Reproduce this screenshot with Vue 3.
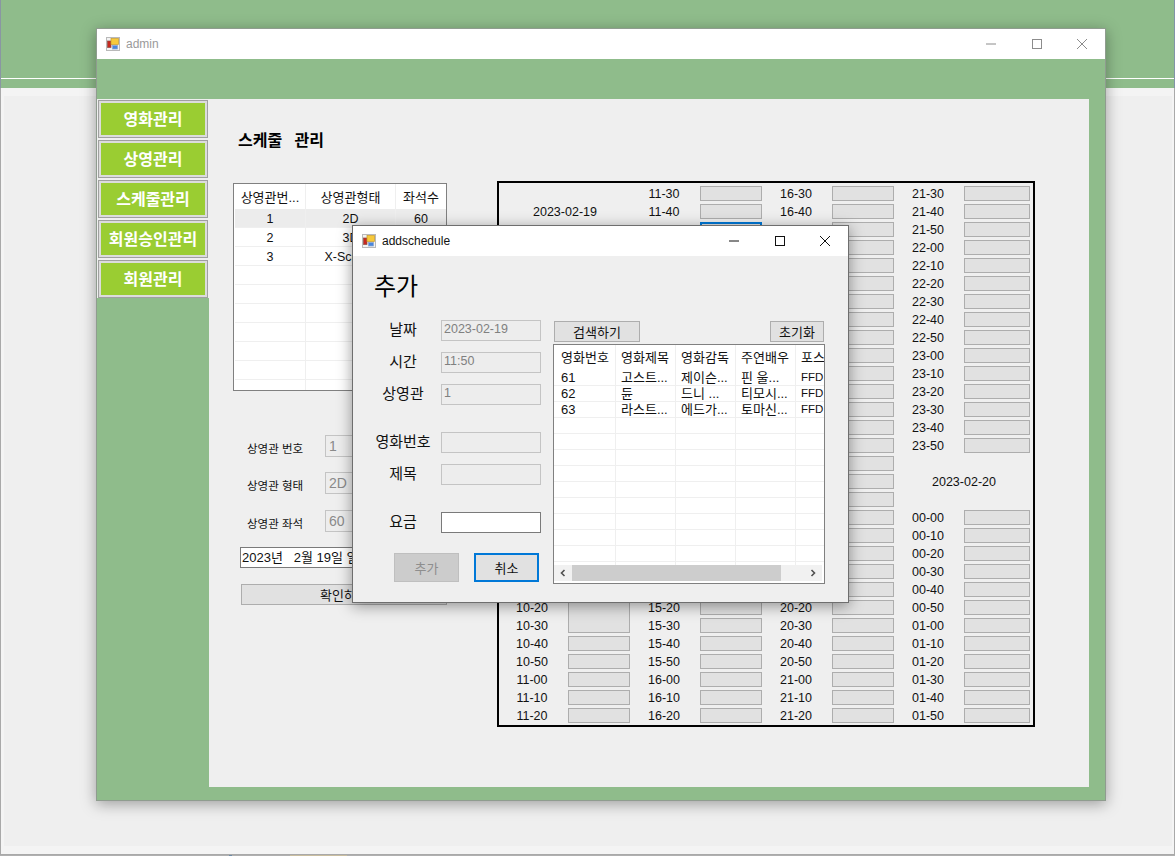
<template>
  <div class="desktop">
    <!-- 뒤쪽 메인 창 -->
    <div class="back-window">
      <div class="back-head"><div class="back-line"></div></div>
      <div class="back-body"></div>
    </div>
    <div class="back-strip">
      <span class="strip-blue"></span>
      <span class="strip-beige"></span>
    </div>

    <!-- admin 창 -->
    <div class="admin-window">
      <div class="titlebar">
        <svg class="app-icon" viewBox="0 0 14 14">
          <rect x="0.5" y="0.5" width="13" height="13" fill="#f2f2f2" stroke="#b9b9b9" />
          <rect x="1.5" y="4" width="3.5" height="6.5" fill="#c8281e" stroke="#8c4a44" stroke-width="0.7" />
          <rect x="5" y="1.5" width="7.5" height="6" fill="#f7c93a" stroke="#c79a2a" stroke-width="0.7" />
          <rect x="6.5" y="8.5" width="5" height="3.5" fill="#4a86dc" stroke="#8aa6cf" stroke-width="0.7" />
        </svg>
        <span class="title-text gray">admin</span>
        <div class="controls gray-stroke">
          <svg viewBox="0 0 10 10"><path d="M0 5h10" /></svg>
          <svg viewBox="0 0 10 10"><rect x="0.5" y="0.5" width="9" height="9" fill="none" /></svg>
          <svg viewBox="0 0 10 10"><path d="M0 0l10 10M10 0L0 10" /></svg>
        </div>
      </div>
      <div class="admin-band"></div>
      <div class="admin-main">
        <div class="sidebar">
          <div v-for="m in menus" :key="m" class="menu-btn"><span>{{ m }}</span></div>
        </div>
        <div class="content">
          <div class="left-col">
            <div class="page-title">스케줄 관리</div>
            <table class="hall-table">
              <thead>
                <tr>
                  <th>상영관번...</th>
                  <th>상영관형태</th>
                  <th>좌석수</th>
                </tr>
              </thead>
              <tbody>
                <tr v-for="(h, i) in halls" :key="i" :class="{ selected: i === 0 }">
                  <td>{{ h[0] }}</td>
                  <td>{{ h[1] }}</td>
                  <td>{{ h[2] }}</td>
                </tr>
              </tbody>
            </table>
            <div class="hall-field first">
              <label>상영관 번호</label>
              <input type="text" value="1" disabled />
            </div>
            <div class="hall-field">
              <label>상영관 형태</label>
              <input type="text" value="2D" disabled />
            </div>
            <div class="hall-field third">
              <label>상영관 좌석</label>
              <input type="text" value="60" disabled />
            </div>
            <div class="date-picker">2023년 &nbsp; 2월 19일 일</div>
            <button class="confirm-btn">확인하기</button>
          </div>
          <div class="schedule">
            <template v-for="c in cells" :key="c.key">
              <div v-if="c.box" class="slot" :class="{ focused: c.focused, wide: c.col === 8 }" :style="c.style"></div>
              <div v-else class="slot-label" :style="c.style">{{ c.text }}</div>
            </template>
          </div>
        </div>
      </div>
    </div>

    <!-- addschedule 다이얼로그 -->
    <div class="dialog">
      <div class="titlebar dialog-title">
        <svg class="app-icon" viewBox="0 0 14 14">
          <rect x="0.5" y="0.5" width="13" height="13" fill="#f2f2f2" stroke="#b9b9b9" />
          <rect x="1.5" y="4" width="3.5" height="6.5" fill="#c8281e" stroke="#8c4a44" stroke-width="0.7" />
          <rect x="5" y="1.5" width="7.5" height="6" fill="#f7c93a" stroke="#c79a2a" stroke-width="0.7" />
          <rect x="6.5" y="8.5" width="5" height="3.5" fill="#4a86dc" stroke="#8aa6cf" stroke-width="0.7" />
        </svg>
        <span class="title-text">addschedule</span>
        <div class="controls dark-stroke">
          <svg viewBox="0 0 10 10"><path d="M0 5h10" /></svg>
          <svg viewBox="0 0 10 10"><rect x="0.5" y="0.5" width="9" height="9" fill="none" /></svg>
          <svg viewBox="0 0 10 10"><path d="M0 0l10 10M10 0L0 10" /></svg>
        </div>
      </div>
      <div class="dialog-heading">추가</div>
      <div class="dialog-body">
        <div class="form">
          <div v-for="f in formRows" :key="f.label" class="form-row" :class="{ spaced: f.spaced }">
            <label>{{ f.label }}</label>
            <input type="text" :value="f.value" :disabled="!f.editable" />
          </div>
          <div class="form-actions">
            <button class="act-btn disabled-btn">추가</button>
            <button class="act-btn focus-btn">취소</button>
          </div>
        </div>
        <div class="movie-side">
          <div class="movie-tools">
            <button class="tool-btn search">검색하기</button>
            <button class="tool-btn reset">초기화</button>
          </div>
          <div class="movie-grid">
            <div class="grid-row grid-head">
              <div v-for="h in movieHeads" :key="h" class="grid-cell">{{ h }}</div>
            </div>
            <div class="grid-rows">
              <div v-for="(r, i) in movieRows" :key="i" class="grid-row">
                <div v-for="(t, j) in r" :key="j" class="grid-cell">{{ t }}</div>
              </div>
            </div>
            <div class="scrollbar">
              <div class="arrow">
                <svg viewBox="0 0 8 8"><path d="M5.5 1L2.5 4l3 3" /></svg>
              </div>
              <div class="thumb"></div>
              <div class="arrow right">
                <svg viewBox="0 0 8 8"><path d="M2.5 1l3 3-3 3" /></svg>
              </div>
            </div>
          </div>
        </div>
      </div>
    </div>
  </div>
</template>

<script setup>
const menus = ['영화관리', '상영관리', '스케줄관리', '회원승인관리', '회원관리']

const halls = [
  ['1', '2D', '60'],
  ['2', '3D', ''],
  ['3', 'X-Screen', ''],
  ['', '', ''],
  ['', '', ''],
  ['', '', ''],
  ['', '', ''],
  ['', '', ''],
  ['', '', ''],
  ['', '', '']
]

const formRows = [
  { label: '날짜', value: '2023-02-19' },
  { label: '시간', value: '11:50' },
  { label: '상영관', value: '1' },
  { label: '영화번호', value: '', spaced: true },
  { label: '제목', value: '' },
  { label: '요금', value: '', spaced: true, editable: true }
]

const movieHeads = ['영화번호', '영화제목', '영화감독', '주연배우', '포스']
const movieRows = [
  ['61', '고스트...', '제이슨...', '핀 울...', 'FFD'],
  ['62', '듄', '드니 ...', '티모시...', 'FFD'],
  ['63', '라스트...', '에드가...', '토마신...', 'FFD'],
  ...Array.from({ length: 10 }, () => ['', '', '', '', ''])
]

// 분 -> "11-30" 형식
const fmt = (min) => {
  const m = min % 1440
  const hh = String(Math.floor(m / 60)).padStart(2, '0')
  const mm = String(m % 60).padStart(2, '0')
  return hh + '-' + mm
}

const place = (col, row, span = 1, colSpan = 1) => ({
  gridColumn: col + ' / span ' + colSpan,
  gridRow: row + 1 + ' / span ' + span
})

const cells = [
  { key: 'd1', text: '2023-02-19', style: place(1, 1, 1, 2) },
  { key: 'd2', text: '2023-02-20', style: place(7, 16, 1, 2) }
]

for (let k = 0; k < 30; k++) {
  // 3~22행은 다이얼로그에 가려지는 부분
  const covered = k >= 3 && k <= 22
  if (k >= 23) {
    cells.push({ key: 'a' + k, text: fmt(390 + k * 10), style: place(1, k) })
    if (k !== 24) {
      cells.push({ key: 'ab' + k, box: true, col: 2, style: place(2, k, k === 23 ? 2 : 1) })
    }
  }
  if (!covered) {
    cells.push({ key: 'b' + k, text: fmt(690 + k * 10), style: place(3, k) })
    cells.push({ key: 'bb' + k, box: true, col: 4, focused: k === 2, style: place(4, k) })
    cells.push({ key: 'c' + k, text: fmt(990 + k * 10), style: place(5, k) })
  }
  cells.push({ key: 'cb' + k, box: true, col: 6, style: place(6, k) })
  if (k < 15 || k >= 18) {
    const min = k < 15 ? 1290 + k * 10 : 1440 + (k - 18) * 10
    cells.push({ key: 'e' + k, text: fmt(min), style: place(7, k) })
    cells.push({ key: 'eb' + k, box: true, col: 8, style: place(8, k) })
  }
}
</script>

<style>
html,
body {
  margin: 0;
  overflow: hidden;
  background: #fff;
}
</style>

<style scoped>
.desktop {
  position: relative;
  width: 1175px;
  height: 856px;
  overflow: hidden;
  background: #fff;
  font-family: "Liberation Sans", "Noto Sans CJK KR", sans-serif;
  font-size: 12px;
  color: #111;
}

.back-window {
  height: 855px;
  display: flex;
  flex-direction: column;
}
.back-head {
  height: 88px;
  box-sizing: border-box;
  background: #8fbc8b;
  flex: none;
  padding-top: 78px;
  border-left: 1px solid #8a96a3;
  border-right: 1px solid #8294a8;
}
.back-line {
  height: 1px;
  background: #fff;
}
.back-body {
  flex: 1;
  box-sizing: border-box;
  background: #f4f4f4;
  border: 1px solid #a9a9a9;
  border-top: none;
  padding: 8px 2px 8px 3px;
  display: flex;
}
.back-body::before {
  content: '';
  flex: 1;
  background: #efefef;
}
.back-strip {
  height: 1px;
  background: #b0b0b0;
  display: flex;
}
.strip-blue {
  width: 3px;
  margin-left: 229px;
  background: #6e8ba6;
}
.strip-beige {
  width: 57px;
  margin-left: 58px;
  background: #c9bd9f;
}

.admin-window {
  position: absolute;
  left: 96px;
  top: 28px;
  width: 1010px;
  height: 773px;
  box-sizing: border-box;
  border: 1px solid #8f9c8f;
  background: #8fbc8b;
  box-shadow: 0 3px 14px rgba(0, 0, 0, 0.35);
}
.titlebar {
  height: 30px;
  background: #fff;
  display: flex;
  align-items: center;
  padding-left: 9px;
  position: relative;
}
.app-icon {
  width: 14px;
  height: 14px;
  flex: none;
}
.title-text {
  margin-left: 6px;
  font-size: 12px;
}
.gray {
  color: #9a9a9a;
}
.controls {
  position: absolute;
  right: 0;
  top: 0;
  height: 100%;
  display: flex;
  align-items: center;
}
.controls svg {
  width: 10px;
  height: 10px;
  flex: none;
  fill: none;
  margin-right: 35.5px;
}
.controls svg:last-child {
  margin-right: 18px;
}
.gray-stroke svg {
  stroke: #8c8c8c;
  stroke-width: 1;
}
.dark-stroke svg {
  stroke: #111;
  stroke-width: 1;
}
.admin-band {
  height: 40px;
}
.admin-main {
  display: flex;
  height: 688px;
  align-items: flex-start;
}
.sidebar {
  width: 112px;
  flex: none;
  box-sizing: border-box;
  background: #efefef;
  padding: 1px 1px 0;
  display: flex;
  flex-direction: column;
  gap: 2px;
}
.menu-btn {
  height: 38px;
  width: 110px;
  box-sizing: border-box;
  border: 1px solid #a0a0a0;
  background: #dcdcdc;
  padding: 2px;
  display: flex;
}
.menu-btn span {
  flex: 1;
  background: #9acd32;
  color: #fff;
  font-weight: 700;
  font-size: 16px;
  padding-bottom: 2px;
  display: flex;
  align-items: center;
  justify-content: center;
}
.content {
  width: 880px;
  height: 688px;
  flex: none;
  background: #efefef;
  box-sizing: border-box;
  padding-left: 24px;
  display: flex;
  gap: 50px;
  align-items: flex-start;
}
.left-col {
  width: 214px;
  flex: none;
}
.page-title {
  margin: 32px 0 0 5px;
  height: 20px;
  line-height: 20px;
  font-size: 16px;
  word-spacing: 8px;
  font-weight: 700;
  color: #000;
}
.hall-table {
  display: block;
  margin-top: 32px;
  width: 214px;
  height: 208px;
  box-sizing: border-box;
  border: 1px solid #808080;
  background: #fff;
  overflow: hidden;
  border-collapse: collapse;
  padding: 0 1px;
}
.hall-table th {
  height: 25px;
  padding: 0;
  font-weight: 400;
  font-size: 13px;
  border-right: 1px solid #efefef;
  white-space: nowrap;
  text-align: center;
}
.hall-table th:first-child {
  width: 70px;
  min-width: 70px;
}
.hall-table th:nth-child(2) {
  width: 89px;
  min-width: 89px;
}
.hall-table th:nth-child(3) {
  width: 50px;
  min-width: 50px;
}
.hall-table td {
  height: 16px;
  padding: 2px 0 0;
  text-align: center;
  font-size: 12.5px;
  line-height: 16px;
  border-right: 1px solid #efefef;
  border-bottom: 1px solid #efefef;
}
.hall-table tr.selected td {
  background: #ececec;
}
.hall-field {
  display: flex;
  align-items: center;
  margin: 15px 0 0 14px;
  height: 22px;
}
.hall-field.first {
  margin-top: 44px;
}
.hall-field.third {
  margin-top: 16px;
}
.hall-field label {
  width: 78px;
  flex: none;
  font-size: 11.5px;
  padding-top: 3px;
}
.hall-field input {
  width: 100px;
  height: 22px;
  box-sizing: border-box;
  border: 1px solid #c4c4c4;
  background: #ededed;
  color: #8a8a8a;
  font: inherit;
  font-size: 14px;
  padding: 0 3px;
  outline: none;
}
.date-picker {
  margin: 15px 0 0 7px;
  width: 207px;
  height: 21px;
  box-sizing: border-box;
  border: 1px solid #7a7a7a;
  background: #fff;
  line-height: 20px;
  padding-left: 1px;
  font-size: 13px;
  white-space: nowrap;
  overflow: hidden;
}
.confirm-btn {
  display: block;
  margin: 16px 0 0 8px;
  width: 206px;
  height: 21px;
  box-sizing: border-box;
  border: 1px solid #adadad;
  background: #e1e1e1;
  font: inherit;
  font-size: 13px;
  color: #111;
  padding: 0;
}

.schedule {
  margin-top: 82px;
  width: 538px;
  height: 546px;
  box-sizing: border-box;
  border: 2px solid #000;
  padding: 1px 0;
  display: grid;
  grid-template-columns: repeat(7, 66px) 72px;
  grid-template-rows: repeat(30, 18px);
}
.slot-label {
  display: flex;
  align-items: center;
  justify-content: center;
  font-size: 12.5px;
  padding-top: 2px;
  color: #111;
  white-space: nowrap;
}
.slot {
  box-sizing: border-box;
  margin: 2px 0 1px 3px;
  width: 62px;
  background: #e1e1e1;
  border: 1px solid #adadad;
}
.slot.wide {
  width: 66px;
}
.slot.focused {
  border: 2px solid #0078d7;
}

.dialog {
  position: absolute;
  left: 352px;
  top: 225px;
  width: 497px;
  height: 378px;
  box-sizing: border-box;
  border: 1px solid #6e6e6e;
  background: #efefef;
  box-shadow: 0 3px 14px rgba(0, 0, 0, 0.4);
}
.dialog-heading {
  margin: 16px 0 0 21px;
  height: 30px;
  line-height: 30px;
  font-size: 24px;
  color: #000;
}
.dialog-body {
  display: flex;
  gap: 12px;
  margin-top: 18px;
}
.form {
  width: 188px;
  flex: none;
}
.form-row {
  display: flex;
  align-items: center;
  height: 21px;
  margin-bottom: 11px;
}
.form-row.spaced {
  margin-top: 27px;
}
.form-row label {
  width: 76px;
  margin-left: 12px;
  flex: none;
  text-align: center;
  font-size: 15px;
  color: #111;
  padding-bottom: 4px;
}
.form-row input {
  width: 100px;
  height: 21px;
  box-sizing: border-box;
  border: 1px solid #c4c4c4;
  background: #ededed;
  color: #808080;
  font: inherit;
  font-size: 12.5px;
  padding: 0 2px 3px;
  outline: none;
}
.form-row input:not(:disabled) {
  background: #fff;
  border-color: #7a7a7a;
}
.form-actions {
  display: flex;
  gap: 15px;
  margin: 20px 0 0 41px;
}
.form-row:last-of-type {
  margin-bottom: 0;
}
.act-btn {
  width: 65px;
  height: 29px;
  box-sizing: border-box;
  font: inherit;
  font-size: 13px;
  padding: 0;
}
.disabled-btn {
  background: #cccccc;
  border: 1px solid #bfbfbf;
  color: #8e8e8e;
}
.focus-btn {
  background: #e1e1e1;
  border: 2px solid #0078d7;
  color: #111;
}
.movie-side {
  width: 272px;
  flex: none;
  padding-top: 1px;
}
.movie-tools {
  display: flex;
  justify-content: space-between;
  padding: 0 1px;
}
.tool-btn {
  height: 21px;
  box-sizing: border-box;
  border: 1px solid #adadad;
  background: #e1e1e1;
  font: inherit;
  font-size: 13px;
  padding: 0;
  color: #111;
}
.tool-btn.search {
  width: 86px;
}
.tool-btn.reset {
  width: 54px;
}
.movie-grid {
  margin-top: 2px;
  height: 240px;
  box-sizing: border-box;
  border: 1px solid #808080;
  background: #fff;
  overflow: hidden;
}
.grid-rows {
  height: 195px;
  overflow: hidden;
}
.grid-row {
  display: grid;
  grid-template-columns: 62px 60px 60px 60px 1fr;
  height: 16px;
  box-sizing: border-box;
  border-bottom: 1px solid #efefef;
  overflow: hidden;
}
.grid-head {
  height: 25px;
  border-bottom: none;
}
.grid-cell {
  box-sizing: border-box;
  border-right: 1px solid #efefef;
  padding-left: 5px;
  white-space: nowrap;
  overflow: hidden;
  line-height: 15px;
  font-size: 13px;
}
.grid-cell:first-child {
  padding-left: 7px;
}
.grid-head .grid-cell {
  line-height: 25px;
}
.grid-cell:last-child {
  border-right: none;
  font-size: 11.5px;
}
.grid-head .grid-cell:last-child {
  font-size: 13px;
}
.scrollbar {
  height: 16px;
  margin-right: 2px;
  background: #f1f1f1;
  display: flex;
  align-items: center;
}
.arrow {
  width: 18px;
  height: 16px;
  flex: none;
  display: flex;
  align-items: center;
  justify-content: center;
}
.arrow.right {
  margin-left: auto;
}
.arrow svg {
  width: 8px;
  height: 8px;
  fill: none;
  stroke: #505050;
  stroke-width: 1.6;
}
.thumb {
  width: 209px;
  height: 16px;
  background: #cdcdcd;
}
</style>
